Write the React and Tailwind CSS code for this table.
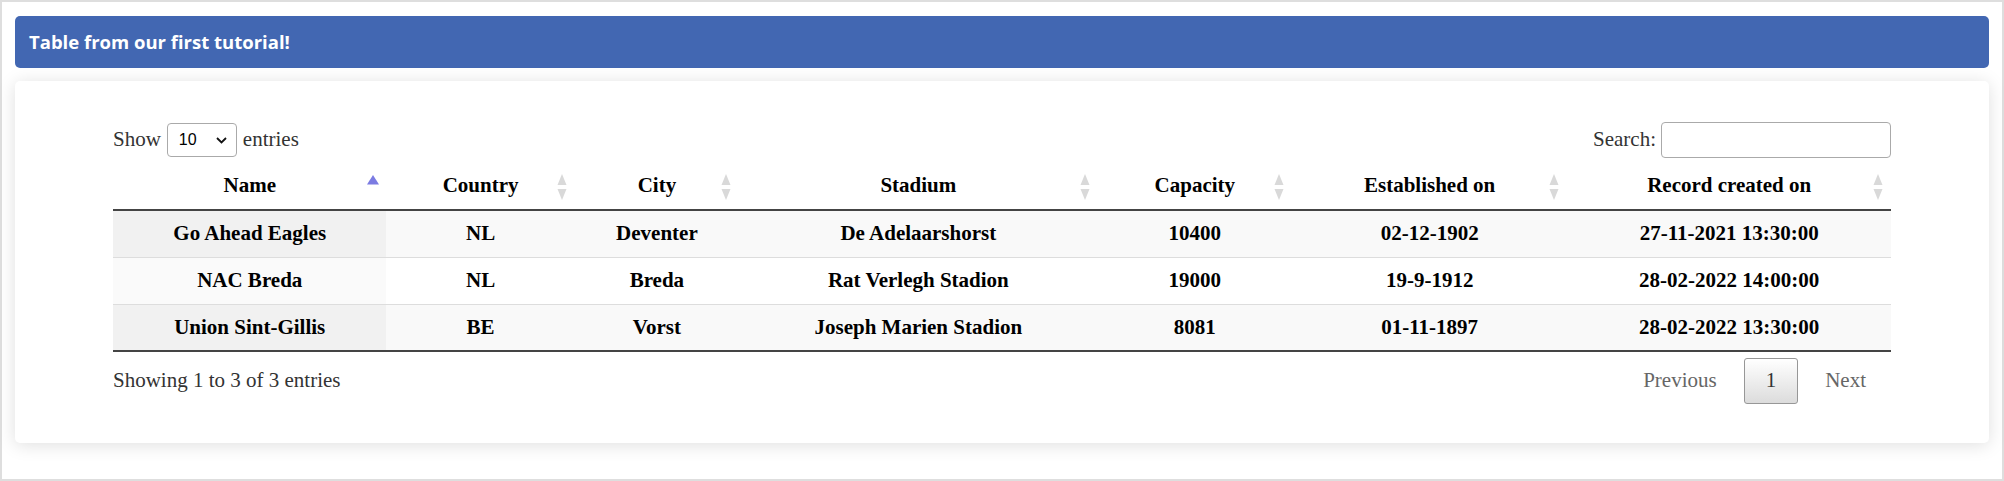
import React from 'react';

const COLUMNS = [
  { key: 'name', label: 'Name', width: 'w-[273px]' },
  { key: 'country', label: 'Country', width: 'w-[188px]' },
  { key: 'city', label: 'City', width: 'w-[164px]' },
  { key: 'stadium', label: 'Stadium', width: 'w-[358px]' },
  { key: 'capacity', label: 'Capacity', width: 'w-[194px]' },
  { key: 'established', label: 'Established on', width: 'w-[275px]' },
  { key: 'created', label: 'Record created on', width: 'w-[323px]' },
];

const ROWS = [
  { name: 'Go Ahead Eagles', country: 'NL', city: 'Deventer', stadium: 'De Adelaarshorst', capacity: '10400', established: '02-12-1902', created: '27-11-2021 13:30:00' },
  { name: 'NAC Breda', country: 'NL', city: 'Breda', stadium: 'Rat Verlegh Stadion', capacity: '19000', established: '19-9-1912', created: '28-02-2022 14:00:00' },
  { name: 'Union Sint-Gillis', country: 'BE', city: 'Vorst', stadium: 'Joseph Marien Stadion', capacity: '8081', established: '01-11-1897', created: '28-02-2022 13:30:00' },
];

function SortBoth() {
  return (
    <svg width="10" height="26" viewBox="0 0 10 26" className="absolute right-[8px] top-[12px]">
      <polygon points="5,0 9.5,11 0.5,11" fill="#d9d9d9" />
      <polygon points="0.5,15 9.5,15 5,26" fill="#d9d9d9" />
    </svg>
  );
}

function SortAsc() {
  return (
    <svg width="12" height="10" viewBox="0 0 12 10" className="absolute right-[7px] top-[13px]">
      <polygon points="6,0 12,9.5 0,9.5" fill="#7b7be2" />
    </svg>
  );
}

export default function App() {
  return (
    <div className="h-[481px] w-full border-2 border-[#dedede] bg-white px-[13px] pt-[14px] font-['Liberation_Serif',serif]">
      <div className="flex h-[52px] items-center rounded-[5px] bg-[#4267b2] px-[14px] font-['Open_Sans',sans-serif] text-[18.5px] font-bold text-white">
        Table from our first tutorial!
      </div>

      <div className="mt-[13px] h-[362px] rounded-[5px] bg-white px-[98px] pt-[41px] shadow-[0_2px_18px_rgba(0,0,0,0.13)]">
        <div className="flex h-[36px] items-center justify-between text-[21px] text-[#333]">
          <div className="flex items-center gap-[6px]">
            <span>Show</span>
            <div className="flex h-[34px] w-[70px] items-center justify-between rounded-[4px] border border-[#aaa] bg-white pl-[11px] pr-[9px] font-['Liberation_Sans',sans-serif] text-[16px] text-black">
              <span>10</span>
              <svg width="11" height="7" viewBox="0 0 11 7">
                <polyline points="1,1 5.5,5.5 10,1" fill="none" stroke="#111" strokeWidth="1.8" />
              </svg>
            </div>
            <span>entries</span>
          </div>
          <div className="flex items-center gap-[5px]">
            <span>Search:</span>
            <div className="h-[36px] w-[230px] rounded-[4px] border border-[#aaa] bg-white" />
          </div>
        </div>

        <table className="mt-[4px] w-full table-fixed text-[21px] text-black">
          <thead>
            <tr>
              {COLUMNS.map((c) => (
                <th key={c.key} className={`relative h-[48px] border-b-2 border-[#444] px-[10px] text-center font-bold ${c.width}`}>
                  {c.label}
                  {c.key === 'name' ? <SortAsc /> : <SortBoth />}
                </th>
              ))}
            </tr>
          </thead>
          <tbody>
            {ROWS.map((r, i) => {
              const odd = i % 2 === 0;
              return (
                <tr key={r.name} className={`${odd ? 'bg-[#f9f9f9]' : 'bg-white'} ${i > 0 ? 'border-t border-[#ddd]' : ''} ${i === ROWS.length - 1 ? 'border-b-2 border-b-[#444]' : ''}`}>
                  {COLUMNS.map((c) => (
                    <td
                      key={c.key}
                      className={`h-[47px] px-[10px] text-center font-bold ${c.key === 'name' ? (odd ? 'bg-[#f1f1f1]' : 'bg-[#fafafa]') : ''}`}
                    >
                      {r[c.key]}
                    </td>
                  ))}
                </tr>
              );
            })}
          </tbody>
        </table>

        <div className="mt-[6px] flex items-center justify-between text-[21px]">
          <span className="text-[#333]">Showing 1 to 3 of 3 entries</span>
          <div className="mr-[5px] flex items-center gap-[7px] text-[#666]">
            <span className="px-[20px]">Previous</span>
            <span className="flex h-[46px] items-center rounded-[3px] border border-[#979797] bg-[linear-gradient(to_bottom,#ffffff_0%,#dcdcdc_100%)] px-[21px] text-[#333]">
              1
            </span>
            <span className="px-[20px]">Next</span>
          </div>
        </div>
      </div>
    </div>
  );
}
